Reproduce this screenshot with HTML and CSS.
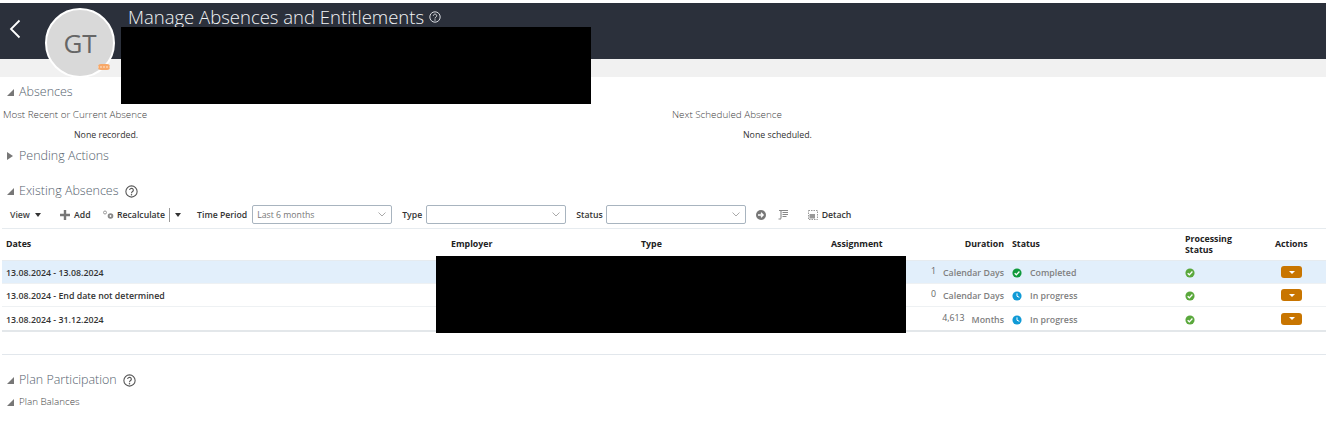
FILE: index.html
```html
<!DOCTYPE html>
<html lang="en">
<head>
<meta charset="utf-8">
<title>Manage Absences and Entitlements</title>
<link rel="stylesheet" href="styles.css">
</head>
<body>
<header class="hero">
  <div class="hero-dark">
    <svg class="back" width="12" height="20" viewBox="0 0 12 20"><path d="M10.5 1.5 2 10l8.500 8.500" fill="none" stroke="#fff" stroke-width="1.800"/></svg>
    <h1 class="page-title">Manage Absences and Entitlements</h1>
    <svg class="help help-light" width="12" height="12" viewBox="0 0 12 12"><use href="#q"/></svg>
  </div>
  <div class="hero-band"></div>
  <div class="avatar">GT<span class="avatar-badge"></span></div>
  <div class="redact redact-head"></div>
</header>

<svg class="defs" width="0" height="0">
  <symbol id="q" viewBox="0 0 12 12">
    <circle cx="6" cy="6" r="5.200" fill="none" stroke="currentColor" stroke-width="1"/>
    <path d="M4.300 4.700a1.700 1.600 0 1 1 2.700 1.300c-.7.500-1 .8-1 1.500" fill="none" stroke="currentColor" stroke-width="1"/>
    <circle cx="6" cy="9" r=".7" fill="currentColor"/>
  </symbol>
  <symbol id="check" viewBox="0 0 12 12">
    <circle cx="6" cy="6" r="5.500" fill="currentColor"/>
    <path d="M3.200 6.200 5.200 8.200 8.900 4.200" fill="none" stroke="#fff" stroke-width="1.600"/>
  </symbol>
  <symbol id="clock" viewBox="0 0 12 12">
    <circle cx="6" cy="6" r="5.500" fill="#0f9ad6"/>
    <path d="M6 2.800V6.300L8.800 7.600" fill="none" stroke="#fff" stroke-width="1.200"/>
  </symbol>
</svg>

<section class="sec sec-absences">
  <h2 class="sec-title"><span class="tri tri-open"></span>Absences</h2>
  <div class="summary">
    <div class="summary-col">
      <div class="summary-label">Most Recent or Current Absence</div>
      <div class="summary-none">None recorded.</div>
    </div>
    <div class="summary-col">
      <div class="summary-label">Next Scheduled Absence</div>
      <div class="summary-none">None scheduled.</div>
    </div>
  </div>
</section>

<section class="sec sec-pending">
  <h2 class="sec-title"><span class="tri tri-closed"></span>Pending Actions</h2>
</section>

<section class="sec sec-existing">
  <h2 class="sec-title"><span class="tri tri-open"></span>Existing Absences<svg class="help help-dark" width="13" height="13" viewBox="0 0 12 12"><use href="#q"/></svg></h2>

  <div class="toolbar">
    <span class="tool tool-view">View<span class="caret"></span></span>
    <span class="tool tool-add"><svg width="10" height="10" viewBox="0 0 10 10"><path d="M5 0v10M0 5h10" stroke="#777" stroke-width="2.400"/></svg>Add</span>
    <span class="tool tool-recalc"><svg width="11" height="10" viewBox="0 0 11 10"><circle cx="2" cy="2.500" r="1.500" fill="none" stroke="#999" stroke-width="1"/><circle cx="7.500" cy="6" r="2.800" fill="#888"/><circle cx="7.500" cy="6" r=".9" fill="#fff"/></svg>Recalculate</span>
    <span class="tool-sep"></span>
    <span class="caret caret-solo"></span>
    <label class="tool field-time">Time Period<span class="select select-value">Last 6 months<svg class="chev" width="8" height="5" viewBox="0 0 8 5"><path d="M.5.500 4 4 7.500.500" fill="none" stroke="#aaa"/></svg></span></label>
    <label class="tool field-type">Type<span class="select"><svg class="chev" width="8" height="5" viewBox="0 0 8 5"><path d="M.5.500 4 4 7.500.500" fill="none" stroke="#aaa"/></svg></span></label>
    <label class="tool field-status">Status<span class="select"><svg class="chev" width="8" height="5" viewBox="0 0 8 5"><path d="M.5.500 4 4 7.500.500" fill="none" stroke="#aaa"/></svg></span></label>
    <svg class="tool-go" width="10" height="10" viewBox="0 0 10 10"><circle cx="5" cy="5" r="5" fill="#777"/><path d="M2 5h5M5 2.800 7.200 5 5 7.200" fill="none" stroke="#fff" stroke-width="1.300"/></svg>
    <svg class="tool-query" width="11" height="11" viewBox="0 0 11 11"><path d="M1 1.500h9M4.500 3.500h5.500M4.500 5.500h5.500M4.500 7.500h4M3 1v8.500M.5 10H3" stroke="#888" stroke-width="1.100" fill="none"/></svg>
    <span class="tool tool-detach"><svg width="10" height="10" viewBox="0 0 10 10"><rect x=".5" y=".5" width="9" height="9" fill="none" stroke="#999" stroke-dasharray="1.500 1"/><rect x="1.500" y="4" width="5.500" height="4.500" fill="#999"/></svg>Detach</span>
  </div>

  <div class="grid">
    <div class="row row-head">
      <div>Dates</div><div>Employer</div><div>Type</div><div>Assignment</div>
      <div class="c-right">Duration</div><div>Status</div><div>Processing Status</div><div>Actions</div>
    </div>
    <div class="row row-body row-selected">
      <div class="c-date">13.08.2024 - 13.08.2024</div><div></div><div></div><div></div>
      <div class="c-dur"><span class="num">1</span><span class="unit">Calendar Days</span></div>
      <div class="c-status"><svg class="ic-ok" width="10" height="10"><use href="#check"/></svg>Completed</div>
      <div class="c-proc"><svg class="ic-proc" width="10" height="10"><use href="#check"/></svg></div>
      <div class="c-act"><button class="act-btn"><span class="act-caret"></span></button></div>
    </div>
    <div class="row row-body">
      <div class="c-date">13.08.2024 - End date not determined</div><div></div><div></div><div></div>
      <div class="c-dur"><span class="num">0</span><span class="unit">Calendar Days</span></div>
      <div class="c-status"><svg width="10" height="10"><use href="#clock"/></svg>In progress</div>
      <div class="c-proc"><svg class="ic-proc" width="10" height="10"><use href="#check"/></svg></div>
      <div class="c-act"><button class="act-btn"><span class="act-caret"></span></button></div>
    </div>
    <div class="row row-body row-last">
      <div class="c-date">13.08.2024 - 31.12.2024</div><div></div><div></div><div></div>
      <div class="c-dur"><span class="num">4,613</span><span class="unit">Months</span></div>
      <div class="c-status"><svg width="10" height="10"><use href="#clock"/></svg>In progress</div>
      <div class="c-proc"><svg class="ic-proc" width="10" height="10"><use href="#check"/></svg></div>
      <div class="c-act"><button class="act-btn"><span class="act-caret"></span></button></div>
    </div>
    <div class="redact redact-table"></div>
  </div>
</section>

<hr class="divider">

<section class="sec sec-plan">
  <h2 class="sec-title"><span class="tri tri-open"></span>Plan Participation<svg class="help help-dark" width="13" height="13" viewBox="0 0 12 12"><use href="#q"/></svg></h2>
  <h3 class="sub-title"><span class="tri tri-open"></span>Plan Balances</h3>
</section>
</body>
</html>
```
FILE: styles.css
```css
* { box-sizing: border-box; }
html, body { margin: 0; padding: 0; background: #fff; }
body {
  width: 1326px;
  height: 427px;
  overflow: hidden;
  font-family: "Open Sans", "Noto Sans", sans-serif;
  color: #333;
  padding-top: 3px;
}
.defs { position: absolute; }

.hero { position: relative; height: 74px; }
.hero-dark {
  height: 56px;
  background: #2b303b;
  display: flex;
  align-items: flex-start;
  padding-left: 128px;
}
.hero-band { height: 18px; background: #f1f1f1; }
.back { position: absolute; left: 9px; top: 16px; }
.page-title {
  margin: 2px 0 0;
  font-size: 18.500px;
  line-height: 24px;
  font-weight: 300;
  color: #f2f4f6;
  white-space: nowrap;
}
.help { display: block; }
.help-light { color: #d8dbe0; margin: 8px 0 0 5px; }
.help-dark { color: #555; margin-left: 6px; }
.avatar {
  position: absolute;
  left: 45px;
  top: 5px;
  width: 70px;
  height: 70px;
  border-radius: 50%;
  background: #d9d9d9;
  border: 2px solid #fff;
  color: #666;
  font-size: 26px;
  font-weight: 400;
  display: flex;
  align-items: center;
  justify-content: center;
}
.avatar-badge {
  position: absolute;
  left: 51px;
  top: 54px;
  width: 12px;
  height: 6px;
  border-radius: 3px;
  background-color: #f8a868;
  background-image: radial-gradient(circle, #fde6d0 .8px, transparent 1.100px);
  background-size: 3px 6px;
  background-position: 1.500px 0;
}
.redact { position: absolute; background: #000; }
.redact-head { left: 121px; top: 24px; width: 470px; height: 77px; }

.sec-title {
  margin: 0;
  font-size: 12.500px;
  line-height: 18px;
  font-weight: 300;
  color: #55626e;
  display: flex;
  align-items: center;
  padding-left: 7px;
}
.tri { display: inline-block; margin-right: 5px; flex: none; }
.tri-open {
  width: 0; height: 0;
  border-left: 7px solid transparent;
  border-bottom: 7px solid #777;
}
.tri-closed {
  width: 0; height: 0;
  border-top: 4.500px solid transparent;
  border-bottom: 4.500px solid transparent;
  border-left: 6px solid #777;
  margin-right: 6px;
}
.sec-absences { padding-top: 6px; }
.summary { display: grid; grid-template-columns: 669px 1fr; padding: 6px 0 0 3px; }
.summary-label { font-size: 9.850px; line-height: 14px; font-weight: 300; color: #444; }
.summary-none { font-size: 8.800px; line-height: 14px; margin: 7px 0 0 71px; color: #333; }
.sec-pending { padding-top: 5px; }
.sec-existing { padding-top: 17px; position: relative; }

.toolbar {
  display: flex;
  align-items: center;
  height: 19px;
  margin: 5px 0 0;
  padding-left: 10px;
  font-size: 8.700px;
  font-weight: 600;
  color: #333;
  white-space: nowrap;
}
.tool { display: inline-flex; align-items: center; }
.tool-view { width: 50px; color: #444; }
.caret {
  display: inline-block;
  width: 0; height: 0;
  border-left: 3px solid transparent;
  border-right: 3px solid transparent;
  border-top: 4px solid #333;
  margin-left: 5px;
}
.tool-add { width: 43px; }
.tool-add svg { margin-right: 4px; }
.tool-recalc svg { margin-right: 3px; }
.tool-sep { width: 1px; height: 14px; background: #999; margin: 0 0 0 4px; }
.caret-solo { margin-left: 5px; margin-right: 16px; }
.select {
  display: flex;
  align-items: center;
  justify-content: flex-end;
  width: 140px;
  height: 19px;
  margin-left: 4px;
  background: #fff;
  border: 1px solid #a8b4bf;
  border-radius: 2px;
  padding-right: 5px;
}
.select-value { justify-content: space-between; margin-left: 5px; padding-left: 4px; font-weight: 400; color: #777; }
.field-type { margin-left: 10px; }
.field-status { margin-left: 10px; }
.field-status .select { margin-left: 3px; }
.tool-go { margin-left: 10px; }
.tool-query { margin-left: 12px; }
.tool-detach { margin-left: 19px; }
.tool-detach svg { margin-right: 4px; }

.grid {
  position: relative;
  margin: 4px 0 0 2px;
  border-top: 1px solid #e6ebef;
}
.row {
  display: grid;
  grid-template-columns: 445px 190px 190px 90px 91px 173px 90px 1fr;
  padding-left: 4px;
  align-items: center;
}
.row-head {
  height: 32px;
  font-size: 8.800px;
  font-weight: 700;
  line-height: 11px;
  color: #222;
  border-bottom: 1px solid #e6ebef;
  white-space: nowrap;
}
.row-head > :nth-child(7) { white-space: normal; width: 60px; }
.row-head .c-right { text-align: right; padding-right: 8px; }
.row-body {
  height: 23px;
  padding-top: 2px;
  font-size: 8.800px;
  font-weight: 600;
  color: #333;
  border-bottom: 1px solid #eef1f3;
}
.row-selected { background: #e2effb; }
.row-last { border-bottom: 2px solid #e3e7ea; height: 25px; }
.c-dur { display: flex; justify-content: flex-end; align-items: center; padding-right: 8px; font-weight: 400; color: #777; }
.num { margin-right: 7px; color: #666; position: relative; top: -2px; }
.unit { font-weight: 600; color: #808080; }
.c-status { display: flex; align-items: center; font-weight: 600; color: #808080; }
.c-status svg { margin-right: 8px; }
.ic-ok { color: #109a3c; }
.ic-proc { color: #5aa83c; display: block; }
.c-act { padding-left: 6px; }
.act-btn {
  display: flex;
  align-items: center;
  justify-content: center;
  width: 21px;
  height: 12px;
  margin-top: -2px;
  padding: 0;
  border: 0;
  border-radius: 3px;
  background: #c87500;
}
.act-caret {
  width: 0; height: 0;
  border-left: 3.500px solid transparent;
  border-right: 3.500px solid transparent;
  border-top: 3.500px solid #fff;
}
.redact-table { left: 434px; top: 27px; width: 470px; height: 77px; }

.divider { margin: 22px 0 0 2px; border: 0; border-top: 1px solid #e2e7ec; }
.sec-plan { padding-top: 16px; }
.sub-title {
  margin: 6px 0 0;
  font-size: 9.800px;
  line-height: 14px;
  font-weight: 300;
  color: #444;
  display: flex;
  align-items: center;
  padding-left: 7px;
}
```
